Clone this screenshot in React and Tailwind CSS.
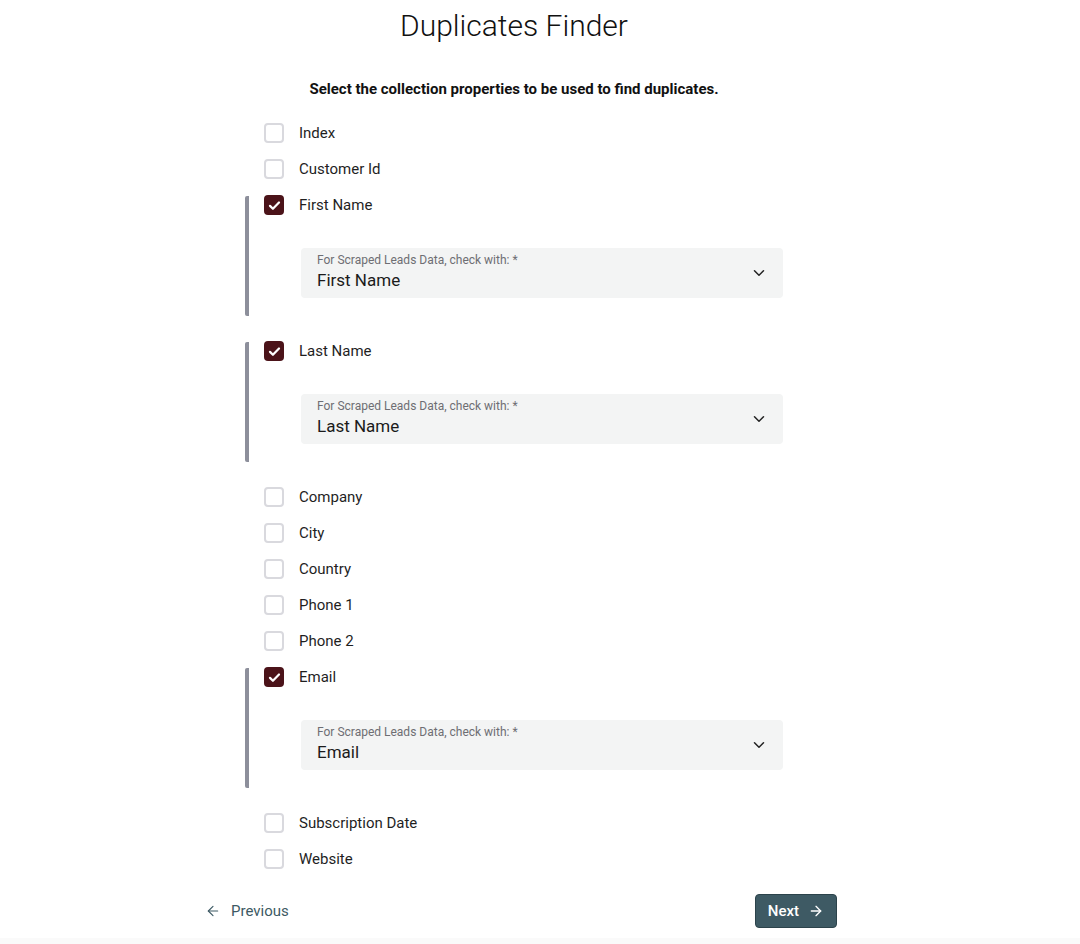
import { useState } from "react";
import { ChevronDown, ArrowLeft, ArrowRight } from "lucide-react";

const FIELDS = [
  "Index",
  "Customer Id",
  "First Name",
  "Last Name",
  "Company",
  "City",
  "Country",
  "Phone 1",
  "Phone 2",
  "Email",
  "Subscription Date",
  "Website",
];

function Box({ checked }) {
  if (checked) {
    return (
      <span className="flex h-5 w-5 shrink-0 items-center justify-center rounded-[4px] bg-[#4b1319]">
        <svg viewBox="0 0 16 16" className="h-[15px] w-[15px]" fill="none">
          <path d="M3.2 8.4l3.1 3 6.5-6.6" stroke="#fff" strokeWidth="2.4" strokeLinecap="round" strokeLinejoin="round" />
        </svg>
      </span>
    );
  }
  return <span className="block h-5 w-5 shrink-0 rounded-[4px] border-2 border-[#d9d9de] bg-white" />;
}

function Row({ label, checked, onToggle, tall }) {
  return (
    <button
      type="button"
      onClick={onToggle}
      className={`flex w-full items-center gap-[15px] text-left ${tall ? "h-9" : "h-4"}`}
    >
      <Box checked={checked} />
      <span className="text-[15px] text-[#1f1f1f]">{label}</span>
    </button>
  );
}

export default function App() {
  const [checked, setChecked] = useState({
    "First Name": true,
    "Last Name": true,
    Email: true,
  });
  const toggle = (f) => setChecked((c) => ({ ...c, [f]: !c[f] }));

  return (
    <div className="flex min-h-[944px] flex-col bg-white font-['Roboto',sans-serif]">
      <div className="flex-1">
        <h1 className="pr-[52px] pt-[7px] text-center text-[30px] font-light leading-[38px] text-[#111]">
          Duplicates Finder
        </h1>
        <p className="mt-[34px] pr-[52px] text-center text-[15px] font-bold leading-5 text-[#111]">
          Select the collection properties to be used to find duplicates.
        </p>

        <div className="ml-[205px] w-[632px]">
          <div className="ml-[40px] mt-[16px] flex w-[540px] flex-col">
            {FIELDS.map((f) =>
              checked[f] ? (
                <div key={f} className="mb-[17px] mt-[9px] rounded-[2px] border-l-4 border-[#8d8f9b] pb-[18px] pl-[15px]">
                  <div className="pt-[1px]">
                    <Row label={f} checked onToggle={() => toggle(f)} />
                  </div>
                  <div className="ml-[37px] mt-[35px] flex h-[50px] w-[482px] items-center justify-between rounded-[4px] bg-[#f3f4f4] pl-4 pr-[15px]">
                    <div className="-mt-[4px] flex flex-col">
                      <span className="text-[12px] leading-[14px] text-[#6e6e73]">
                        For Scraped Leads Data, check with: *
                      </span>
                      <span className="mt-[3px] text-[17px] leading-[20px] text-[#1b1b1b]">{f}</span>
                    </div>
                    <ChevronDown className="h-[18px] w-[18px] text-[#222]" strokeWidth={2} />
                  </div>
                </div>
              ) : (
                <div key={f} className="pl-[19px]">
                  <Row label={f} checked={false} tall onToggle={() => toggle(f)} />
                </div>
              )
            )}
          </div>

          <div className="mt-[17px] flex items-center justify-between">
            <button type="button" className="flex items-center gap-[10px] text-[15px] text-[#3d5a64]">
              <ArrowLeft className="h-[16px] w-[16px]" strokeWidth={1.7} />
              Previous
            </button>
            <button
              type="button"
              className="flex h-[34px] items-center gap-[9px] rounded-[4px] border border-[#2c434b] bg-[#3e5a64] px-3 text-[15px] font-medium text-white"
            >
              Next
              <ArrowRight className="h-[16px] w-[16px]" strokeWidth={2} />
            </button>
          </div>
        </div>
      </div>
      <div className="h-[6px] bg-[#fafafa]" />
    </div>
  );
}
